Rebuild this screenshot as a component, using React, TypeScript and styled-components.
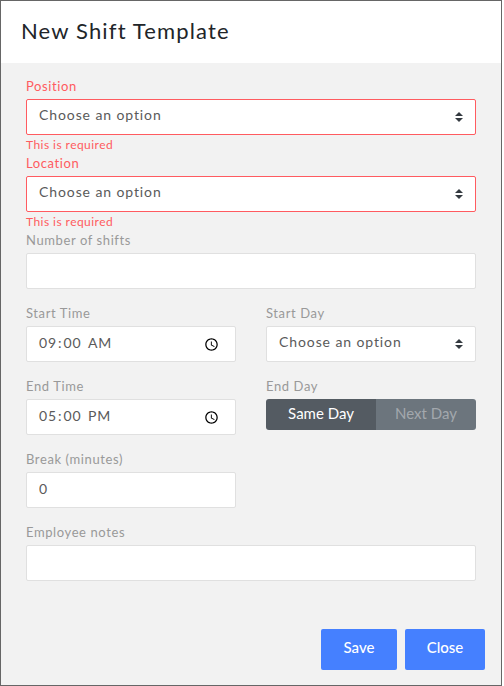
import React from 'react';
import styled, { createGlobalStyle } from 'styled-components';

const GlobalStyle = createGlobalStyle`
    html, body {
        margin: 0;
        padding: 0;
        background: #fff;
    }

    * {
        box-sizing: border-box;
    }
`;

const FONT = `Lato, "Noto Sans", sans-serif`;
const RED = '#ff5b60';
const ARROWS = `url("data:image/svg+xml,%3csvg xmlns='http://www.w3.org/2000/svg' viewBox='0 0 4 5'%3e%3cpath fill='%23343a40' d='M2 0L0 2h4zm0 5L0 3h4z'/%3e%3c/svg%3e")`;

const Modal = styled.div`
    width: 502px;
    height: 686px;
    display: flex;
    flex-direction: column;
    background: #f2f2f2;
    border: 1px solid #666;
    font-family: ${FONT};
`;

const Header = styled.header`
    height: 62px;
    display: flex;
    align-items: center;
    padding: 0 20px 4px;
    background: #fff;
`;

const Title = styled.h1`
    margin: 0;
    font-size: 22px;
    font-weight: 400;
    letter-spacing: 1.15px;
    color: #212529;
`;

const Body = styled.form`
    flex: 1;
    display: flex;
    flex-direction: column;
    padding: 14px 25px 0 25px;
`;

const Row = styled.div`
    display: grid;
    grid-template-columns: 210px 210px;
    justify-content: space-between;
`;

const Field = styled.div<{ $flush?: boolean }>`
    display: flex;
    flex-direction: column;
    margin-bottom: ${({ $flush }) => ($flush ? '0' : '15px')};
`;

const Label = styled.label<{ $invalid?: boolean }>`
    height: 18px;
    margin-bottom: 4px;
    font-size: 13px;
    line-height: 18px;
    letter-spacing: 0.6px;
    color: ${({ $invalid }) => ($invalid ? RED : '#999')};
`;

const ErrorText = styled.div`
    height: 19px;
    padding-top: 1px;
    font-size: 12px;
    line-height: 18px;
    letter-spacing: 0.45px;
    color: ${RED};
`;

const controlStyles = `
    width: 100%;
    height: 36px;
    background-color: #fff;
    border-radius: 2px;
    font-family: ${FONT};
    font-size: 14px;
    letter-spacing: 0.9px;
    color: #5a5a5a;
    outline: none;
`;

const Input = styled.input<{ $invalid?: boolean }>`
    ${controlStyles}
    padding: 0 12px 4px;
    border: 1px solid ${({ $invalid }) => ($invalid ? RED : '#e0e0e0')};

    &::-webkit-calendar-picker-indicator {
        width: 15px;
        height: 15px;
        margin: 5px 4px 0 0;
        padding: 0;
        filter: brightness(0);
    }

    &::-webkit-datetime-edit {
        margin-left: -1px;
    }
`;

const Select = styled.select<{ $invalid?: boolean }>`
    ${controlStyles}
    appearance: none;
    padding: 0 12px 6px;
    border: 1px solid ${({ $invalid }) => ($invalid ? RED : '#e0e0e0')};
    background-image: ${ARROWS};
    background-repeat: no-repeat;
    background-position: right 12px center;
    background-size: 8px 10px;
`;

const Toggle = styled.div`
    display: flex;
    height: 31px;
    border-radius: 3px;
    overflow: hidden;
`;

const ToggleOption = styled.button<{ $active?: boolean }>`
    border: none;
    padding: 0 0 3px;
    width: ${({ $active }) => ($active ? '110px' : '100px')};
    font-family: ${FONT};
    font-size: 15px;
    font-weight: 400;
    color: ${({ $active }) => ($active ? '#fff' : '#a3a8ad')};
    background: ${({ $active }) => ($active ? '#545b62' : '#6c757d')};
`;

const Footer = styled.footer`
    margin-top: auto;
    display: flex;
    justify-content: flex-end;
    gap: 8px;
    padding: 0 16px 15px 0;
`;

const Button = styled.button<{ $wide?: boolean }>`
    width: ${({ $wide }) => ($wide ? '80px' : '76px')};
    height: 41px;
    border: none;
    border-radius: 2px;
    padding: 0 0 6px;
    background: #4580ff;
    color: #fff;
    font-family: ${FONT};
    font-size: 15px;
    font-weight: 500;
`;

function ChoiceSelect({ invalid }: { invalid?: boolean }) {
    return (
        <Select $invalid={invalid} defaultValue="">
            <option value="">Choose an option</option>
        </Select>
    );
}

export default function App() {
    return (
        <>
            <GlobalStyle />
            <Modal>
                <Header>
                    <Title>New Shift Template</Title>
                </Header>
                <Body>
                    <Field $flush>
                        <Label $invalid>Position</Label>
                        <ChoiceSelect invalid />
                        <ErrorText>This is required</ErrorText>
                    </Field>
                    <Field $flush>
                        <Label $invalid>Location</Label>
                        <ChoiceSelect invalid />
                        <ErrorText>This is required</ErrorText>
                    </Field>
                    <Field>
                        <Label>Number of shifts</Label>
                        <Input type="text" />
                    </Field>
                    <Row>
                        <Field>
                            <Label>Start Time</Label>
                            <Input type="time" defaultValue="09:00" />
                        </Field>
                        <Field>
                            <Label>Start Day</Label>
                            <ChoiceSelect />
                        </Field>
                    </Row>
                    <Row>
                        <Field>
                            <Label>End Time</Label>
                            <Input type="time" defaultValue="17:00" />
                        </Field>
                        <Field>
                            <Label>End Day</Label>
                            <Toggle>
                                <ToggleOption type="button" $active>Same Day</ToggleOption>
                                <ToggleOption type="button">Next Day</ToggleOption>
                            </Toggle>
                        </Field>
                    </Row>
                    <Row>
                        <Field>
                            <Label>Break (minutes)</Label>
                            <Input type="text" defaultValue="0" />
                        </Field>
                    </Row>
                    <Field>
                        <Label>Employee notes</Label>
                        <Input type="text" />
                    </Field>
                </Body>
                <Footer>
                    <Button type="button">Save</Button>
                    <Button type="button" $wide>Close</Button>
                </Footer>
            </Modal>
        </>
    );
}
